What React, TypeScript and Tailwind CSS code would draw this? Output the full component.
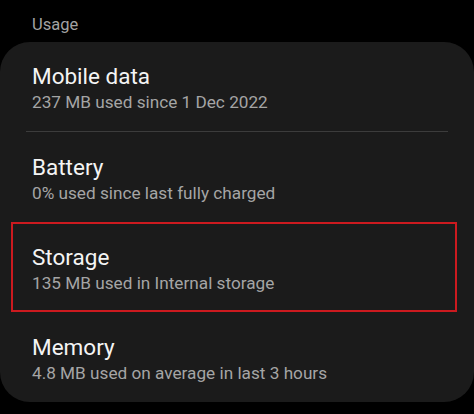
const rows = [
  { title: "Mobile data", subtitle: "237 MB used since 1 Dec 2022" },
  { title: "Battery", subtitle: "0% used since last fully charged" },
  { title: "Storage", subtitle: "135 MB used in Internal storage", highlight: true },
  { title: "Memory", subtitle: "4.8 MB used on average in last 3 hours" },
];

export default function App() {
  return (
    <div className="w-[474px] h-[414px] bg-black font-['Roboto',sans-serif] overflow-hidden">
      {/* Section label */}
      <div className="h-[42px] pl-[32px] pt-[15px] text-[16.5px] leading-[20px] text-[#a3a3a3]">
        Usage
      </div>

      {/* Card */}
      <div className="rounded-[30px] bg-[#1b1b1b]">
        {rows.map((row, index) => (
          <div key={row.title} className="relative">
            <div
              className={
                index === 0
                  ? "h-[89px] pl-[32px] pt-[3px] flex flex-col justify-center gap-[2px]"
                  : "h-[90px] pl-[32px] pt-[3px] flex flex-col justify-center gap-[2px]"
              }
            >
              <div className="text-[22.5px] leading-[26px] text-[#f4f4f4]">{row.title}</div>
              <div className="text-[17.2px] leading-[22px] text-[#a5a5a5]">{row.subtitle}</div>
            </div>
            {index === 0 && <div className="mx-[26px] h-px bg-[#3c3c3c]" />}
            {row.highlight && (
              <div className="absolute left-[11px] right-[17px] top-0 bottom-0 border-2 border-[#cc1a1f]" />
            )}
          </div>
        ))}
      </div>
    </div>
  );
}
